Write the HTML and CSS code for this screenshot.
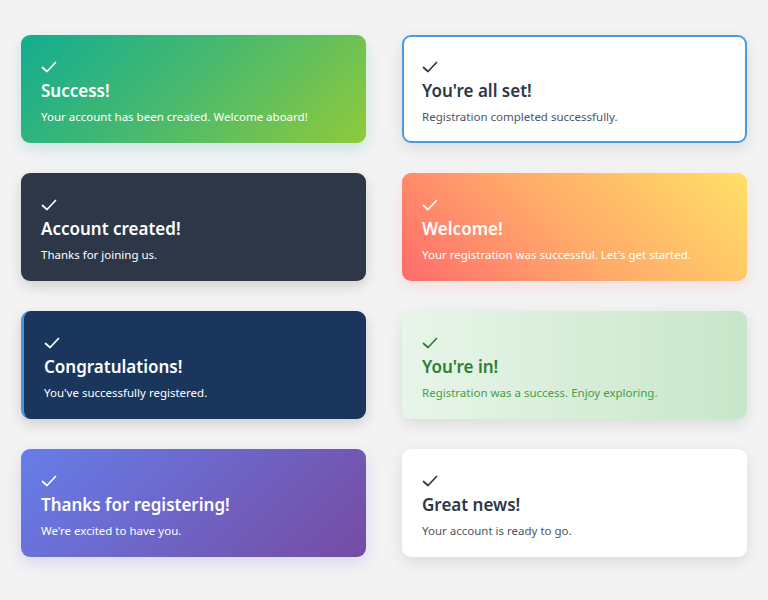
FILE: index.html
```html
<!DOCTYPE html>
<html lang="en">
<head>
    <meta charset="UTF-8">
    <title>Registration messages</title>
    <link rel="stylesheet" href="styles.css">
</head>
<body>
    <div class="raster">
        <div class="kaart kaart-groen">
            <svg class="vinkje" viewBox="0 0 16 16"><path d="M1.5 8.5 L6 12.5 L14.5 3.5"/></svg>
            <h2>Success!</h2>
            <p>Your account has been created. Welcome aboard!</p>
        </div>

        <div class="kaart kaart-rand">
            <svg class="vinkje" viewBox="0 0 16 16"><path d="M1.5 8.5 L6 12.5 L14.5 3.5"/></svg>
            <h2>You're all set!</h2>
            <p>Registration completed successfully.</p>
        </div>

        <div class="kaart kaart-donker">
            <svg class="vinkje" viewBox="0 0 16 16"><path d="M1.5 8.5 L6 12.5 L14.5 3.5"/></svg>
            <h2>Account created!</h2>
            <p>Thanks for joining us.</p>
        </div>

        <div class="kaart kaart-zon">
            <svg class="vinkje" viewBox="0 0 16 16"><path d="M1.5 8.5 L6 12.5 L14.5 3.5"/></svg>
            <h2>Welcome!</h2>
            <p>Your registration was successful. Let's get started.</p>
        </div>

        <div class="kaart kaart-navy">
            <svg class="vinkje" viewBox="0 0 16 16"><path d="M1.5 8.5 L6 12.5 L14.5 3.5"/></svg>
            <h2>Congratulations!</h2>
            <p>You've successfully registered.</p>
        </div>

        <div class="kaart kaart-mint">
            <svg class="vinkje" viewBox="0 0 16 16"><path d="M1.5 8.5 L6 12.5 L14.5 3.5"/></svg>
            <h2>You're in!</h2>
            <p>Registration was a success. Enjoy exploring.</p>
        </div>

        <div class="kaart kaart-paars">
            <svg class="vinkje" viewBox="0 0 16 16"><path d="M1.5 8.5 L6 12.5 L14.5 3.5"/></svg>
            <h2>Thanks for registering!</h2>
            <p>We're excited to have you.</p>
        </div>

        <div class="kaart kaart-wit">
            <svg class="vinkje" viewBox="0 0 16 16"><path d="M1.5 8.5 L6 12.5 L14.5 3.5"/></svg>
            <h2>Great news!</h2>
            <p>Your account is ready to go.</p>
        </div>
    </div>
</body>
</html>
```

FILE: styles.css
```css
body {
    margin: 0;
    background-color: #f3f3f4;
    font-family: "Noto Sans", "Open Sans", sans-serif;
}

.raster {
    display: grid;
    grid-template-columns: 345px 345px;
    column-gap: 36px;
    row-gap: 30px;
    padding: 35px 21px;
}

.kaart {
    border-radius: 9px;
    padding: 24px 20px 17px;
    color: #fff;
    box-shadow: 0 5px 16px rgba(0, 0, 0, 0.1);
}

.kaart h2 {
    margin: 5px 0 0;
    font-size: 17px;
    line-height: 22px;
    font-weight: 600;
}

.kaart p {
    margin: 6px 0 0;
    font-size: 11.5px;
    line-height: 18px;
}

.vinkje {
    display: block;
    width: 16px;
    height: 16px;
    fill: none;
    stroke: currentColor;
    stroke-width: 1.7;
    stroke-linecap: round;
    stroke-linejoin: round;
}

.kaart-groen {
    background: linear-gradient(135deg, #12ad91 0%, #4cba6c 50%, #8fca3a 100%);
    box-shadow: 0 6px 16px rgba(18, 160, 140, 0.18);
}

.kaart-rand {
    background-color: #fff;
    border: 2px solid #4a9be6;
    padding: 22px 18px 15px;
    color: #2d3748;
}

.kaart-rand p,
.kaart-wit p {
    color: #4a5568;
}

.kaart-donker {
    background-color: #2d3748;
    box-shadow: 0 5px 14px rgba(0, 0, 0, 0.15);
}

.kaart-zon {
    background: linear-gradient(45deg, #ff6b6b 0%, #ffa86a 45%, #ffe066 100%);
    box-shadow: 0 6px 16px rgba(255, 110, 100, 0.15);
}

.kaart-navy {
    background-color: #1a365d;
    border-left: 3px solid #4299e1;
    box-shadow: 0 5px 14px rgba(0, 0, 0, 0.15);
}

.kaart-mint {
    background: linear-gradient(to right, #e8f5e9, #c8e6c9);
    color: #2e7d32;
}

.kaart-mint p {
    color: #43a047;
}

.kaart-paars {
    background: linear-gradient(135deg, #667eea 0%, #764ba2 100%);
    box-shadow: 0 6px 16px rgba(102, 90, 200, 0.18);
}

.kaart-wit {
    background-color: #fff;
    color: #2d3748;
}
```
